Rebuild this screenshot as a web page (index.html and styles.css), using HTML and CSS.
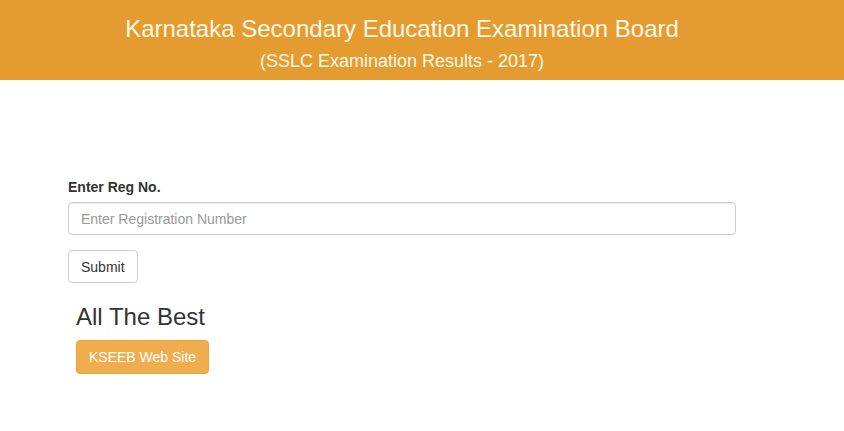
FILE: index.html
```html
<!DOCTYPE html>
<html lang="en">
<head>
<meta charset="utf-8">
<title>SSLC Examination Results - 2017</title>
<link rel="stylesheet" href="styles.css">
</head>
<body>
<header class="banner">
  <h1 class="banner-title">Karnataka Secondary Education Examination Board</h1>
  <p class="banner-sub">(SSLC Examination Results - 2017)</p>
</header>
<main class="content">
  <form class="reg-form">
    <div class="form-group">
      <label class="field-label" for="reg">Enter Reg No.</label>
      <input class="form-control" id="reg" type="text" placeholder="Enter Registration Number">
    </div>
    <button class="btn btn-default" type="button">Submit</button>
  </form>
  <section class="wish">
    <h3 class="wish-title">All The Best</h3>
    <a class="btn btn-warning" href="#">KSEEB Web Site</a>
  </section>
</main>
</body>
</html>
```

FILE: styles.css
```css
* { box-sizing: border-box; }
html, body { margin: 0; padding: 0; }
body {
  font-family: "Liberation Sans", Arial, Helvetica, sans-serif;
  font-size: 14px;
  line-height: 1.42857;
  color: #333;
  background: #fff;
}
.banner {
  background: #e49c31;
  height: 80px;
  padding: 15px 40px 0 0;
  text-align: center;
  color: #fff8e8;
}
.banner-title {
  margin: 0;
  font-size: 24px;
  font-weight: normal;
  line-height: 28px;
}
.banner-sub {
  margin: 7px 0 0;
  font-size: 18px;
  line-height: 22px;
}
.content {
  padding: 97px 0 0 68px;
  width: 736px;
}
.form-group { margin-bottom: 15px; }
.field-label {
  display: block;
  font-weight: bold;
  margin-bottom: 5px;
  line-height: 20px;
}
.form-control {
  display: block;
  width: 100%;
  height: 33px;
  padding: 6px 12px;
  font: inherit;
  font-size: 14px;
  color: #555;
  border: 1px solid #ccc;
  border-radius: 4px;
  box-shadow: inset 0 1px 1px rgba(0,0,0,.075);
  background: #fff;
}
.form-control::placeholder { color: #999; }
.btn {
  display: inline-block;
  height: 33px;
  padding: 6px 12px;
  font: inherit;
  font-size: 14px;
  line-height: 20px;
  border: 1px solid transparent;
  border-radius: 4px;
  text-decoration: none;
  cursor: pointer;
}
.btn-default {
  color: #333;
  background: #fff;
  border-color: #ccc;
}
.wish { padding-left: 8px; }
.wish-title {
  margin: 21px 0 10px;
  font-size: 24px;
  font-weight: normal;
  line-height: 26px;
  color: #333;
}
.btn-warning {
  height: 34px;
  color: #fff;
  background: #f0ad4e;
  border-color: #eea236;
}
```
